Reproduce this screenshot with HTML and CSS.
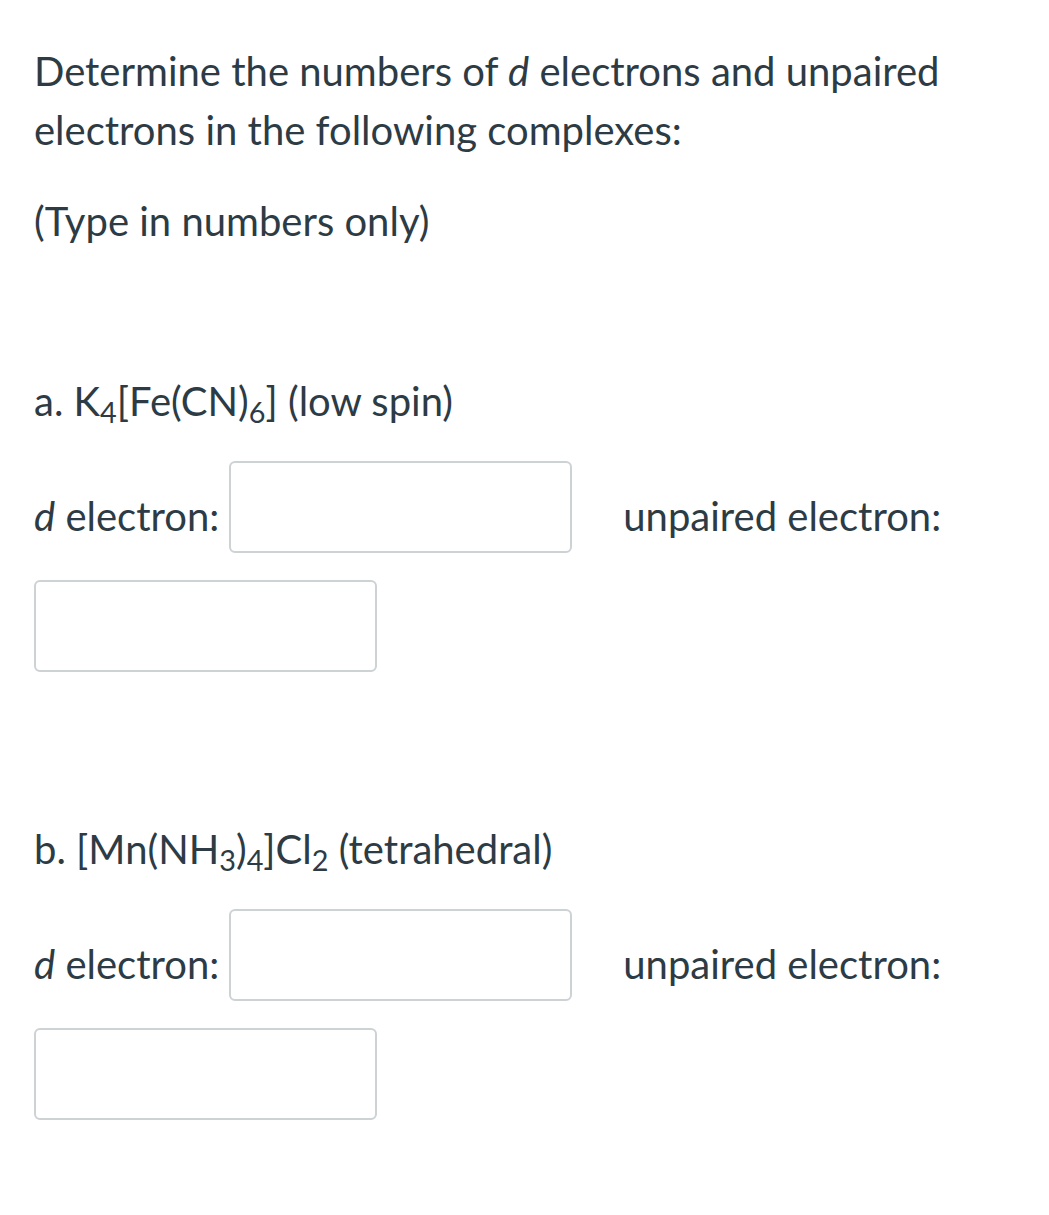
FILE: index.html
```html
<!DOCTYPE html>
<html lang="en">
<head>
<meta charset="utf-8">
<title>Question</title>
<link rel="stylesheet" href="styles.css">
</head>
<body>
<div class="question">
  <p class="intro">Determine the numbers of <em>d</em> electrons and unpaired electrons in the following complexes:</p>
  <p class="note">(Type in numbers only)</p>

  <section class="part part-a">
    <p class="formula">a. K<sub>4</sub>[Fe(CN)<sub>6</sub>] (low spin)</p>
    <div class="answer-row">
      <span class="label"><em>d</em> electron:</span>
      <input class="answer" type="text" aria-label="d electron a">
      <span class="label label-unpaired">unpaired electron:</span>
      <input class="answer answer-wrap" type="text" aria-label="unpaired electron a">
    </div>
  </section>

  <section class="part part-b">
    <p class="formula">b. [Mn(NH<sub>3</sub>)<sub>4</sub>]Cl<sub>2</sub> (tetrahedral)</p>
    <div class="answer-row">
      <span class="label"><em>d</em> electron:</span>
      <input class="answer" type="text" aria-label="d electron b">
      <span class="label label-unpaired">unpaired electron:</span>
      <input class="answer answer-wrap" type="text" aria-label="unpaired electron b">
    </div>
  </section>
</div>
</body>
</html>
```

FILE: styles.css
```css
html, body {
  margin: 0;
  padding: 0;
  background: #ffffff;
}

body {
  font-family: Lato, "Noto Sans", "Liberation Sans", sans-serif;
  font-size: 40px;
  line-height: 59px;
  color: #2d3b45;
}

.question {
  padding: 42px 0 0 34px;
}

p {
  margin: 0;
}

.intro {
  width: 960px;
}

.note {
  margin-top: 32px;
}

.part-a {
  margin-top: 121px;
}

.part-b {
  margin-top: 148px;
}

.formula sub {
  font-size: 0.72em;
  line-height: 0;
  vertical-align: -0.24em;
}

.answer-row {
  margin-top: 30px;
  display: flex;
  flex-wrap: wrap;
  align-items: flex-start;
  row-gap: 27px;
}

.label {
  margin-top: 26px;
  white-space: nowrap;
}

.label-unpaired {
  margin-left: 51px;
}

.answer {
  box-sizing: border-box;
  width: 343px;
  height: 92px;
  margin: 0 0 0 10px;
  padding: 0 12px;
  border: 2px solid #cdd2d5;
  border-radius: 6px;
  background: #ffffff;
  font: inherit;
  color: inherit;
}

.answer-wrap {
  margin-left: 0;
}
```
